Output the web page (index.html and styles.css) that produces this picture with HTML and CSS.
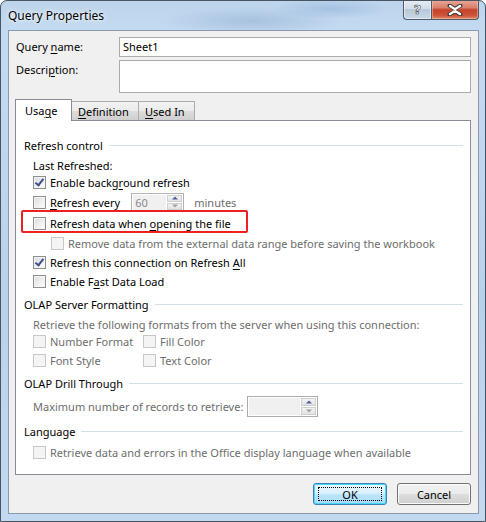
FILE: index.html
```html
<!DOCTYPE html>
<html>
<head>
<meta charset="utf-8">
<title>Query Properties</title>
<link rel="stylesheet" href="styles.css">
</head>
<body>
<div class="window">
  <div class="titlebar">
    <span class="title">Query Properties</span>
    <div class="caption-buttons">
      <div class="cap help">?</div>
      <div class="cap close">
        <svg width="16" height="12" viewBox="0 0 16 12">
          <path d="M2.5 1.5 L8 5 L13.5 1.5 M2.5 10.5 L8 7 L13.5 10.5" fill="none" stroke="#3a3a3a" stroke-width="4" stroke-linecap="round"/>
          <path d="M3 2 L8 5.2 L13 2 M3 10 L8 6.8 L13 10" fill="none" stroke="#ffffff" stroke-width="2.4" stroke-linecap="round"/>
        </svg>
      </div>
    </div>
  </div>

  <div class="client">
    <div class="field-row">
      <span class="field-label">Query <u>n</u>ame:</span>
      <div class="textbox">Sheet1</div>
    </div>
    <div class="field-row">
      <span class="field-label">Descri<u>p</u>tion:</span>
      <div class="textbox tall"></div>
    </div>

    <div class="tabs">
      <div class="tab active"><span>Usa<u>g</u>e</span></div>
      <div class="tab definition"><span><u>D</u>efinition</span></div>
      <div class="tab used-in"><span><u>U</u>sed In</span></div>
    </div>

    <div class="panel">
      <div class="group-title"><span>Refresh control</span></div>
      <div class="row indent mt4"><span>Last Refreshed:</span></div>
      <div class="row indent mt1"><span class="check checked"></span><span>Enable backg<u>r</u>ound refresh</span></div>
      <div class="row indent mt4">
        <span class="check"></span><span><u>R</u>efresh every</span>
        <div class="spin every">
          <span class="spin-value">60</span>
          <div class="spin-arrows">
            <span class="arrow up"></span>
            <span class="arrow down"></span>
          </div>
        </div>
        <span class="muted">minutes</span>
      </div>
      <div class="row indent mt5">
        <span class="check"></span><span>Refresh data when <u>o</u>pening the file</span>
        <div class="callout"></div>
      </div>
      <div class="row indent2 mt4 muted"><span class="check disabled"></span><span>Remove data from the external data range before saving the workbook</span></div>
      <div class="row indent mt3"><span class="check checked"></span><span>Refresh this connection on Refresh <u>A</u>ll</span></div>
      <div class="row indent mt3"><span class="check"></span><span>Enable F<u>a</u>st Data Load</span></div>

      <div class="group-title mt7"><span>OLAP Server Formatting</span></div>
      <div class="row indent mt4 muted"><span>Retrieve the following formats from the server when using this connection:</span></div>
      <div class="row indent mt1 muted">
        <span class="pair-item"><span class="check disabled"></span><span>Number Format</span></span>
        <span class="pair-item"><span class="check disabled"></span><span>Fill Color</span></span>
      </div>
      <div class="row indent mt3 muted">
        <span class="pair-item"><span class="check disabled"></span><span>Font Style</span></span>
        <span class="pair-item"><span class="check disabled"></span><span>Text Color</span></span>
      </div>

      <div class="group-title mt7"><span>OLAP Drill Through</span></div>
      <div class="row indent mt7 muted">
        <span>Maximum number of records to retrieve:</span>
        <div class="spin records">
          <span class="spin-value"></span>
          <div class="spin-arrows">
            <span class="arrow up"></span>
            <span class="arrow down"></span>
          </div>
        </div>
      </div>

      <div class="group-title mt9"><span>Language</span></div>
      <div class="row indent mt5 muted"><span class="check disabled"></span><span>Retrieve data and errors in the Office display language when available</span></div>
    </div>

    <div class="buttons">
      <div class="button default"><span class="focus">OK</span></div>
      <div class="button"><span>Cancel</span></div>
    </div>
  </div>
</div>
</body>
</html>
```

FILE: styles.css
```css
html, body {
  margin: 0;
  padding: 0;
  background: #ffffff;
}

body {
  font-family: "Noto Sans", "Open Sans", sans-serif;
  font-size: 11px;
  color: #000000;
}

u { text-decoration: underline; text-underline-offset: 2px; }

/* Aero window frame */
.window {
  width: 486px;
  height: 522px;
  box-sizing: border-box;
  border: 1px solid #4a5563;
  border-radius: 7px 7px 0 0;
  background:
    radial-gradient(ellipse 90px 14px at 250px 20px, rgba(120,150,190,0.35), transparent),
    radial-gradient(ellipse 60px 10px at 330px 8px, rgba(110,150,200,0.3), transparent),
    linear-gradient(to bottom, #bcd4ec 0px, #c4daf1 30px, #b9d2ec 300px, #c3d9f0 522px);
  display: flex;
  flex-direction: column;
  overflow: hidden;
}

.titlebar {
  height: 29px;
  display: flex;
  align-items: flex-start;
  justify-content: space-between;
  padding-left: 7px;
  flex: none;
}

.title {
  font-family: "Noto Sans", sans-serif;
  font-size: 12px;
  line-height: 29px;
  color: #000;
  text-shadow: 0 0 6px rgba(255,255,255,0.9), 0 0 3px rgba(255,255,255,0.9);
}

.caption-buttons {
  display: flex;
  margin-right: 6px;
  margin-top: -1px;
}

.cap {
  height: 20px;
  box-sizing: border-box;
  border: 1px solid #4e5a69;
  border-top: none;
  display: flex;
  align-items: center;
  justify-content: center;
}

.help {
  width: 28px;
  border-radius: 0 0 0 4px;
  border-right: none;
  background: linear-gradient(to bottom, #e6edf5 0%, #d3dde9 45%, #b9c8d8 50%, #c9d7e5 100%);
  box-shadow: inset 0 0 0 1px rgba(255,255,255,0.5);
  font-family: "DejaVu Sans", sans-serif;
  font-weight: bold;
  font-size: 13px;
  color: #ffffff;
  -webkit-text-stroke: 0.6px #3d4650;
  padding-bottom: 1px;
}

.close {
  width: 48px;
  border-radius: 0 0 4px 0;
  background: linear-gradient(to bottom, #e9a99b 0%, #d9806c 40%, #c4442a 52%, #cd5337 80%, #e08a6a 100%);
  box-shadow: inset 0 0 0 1px rgba(255,210,200,0.45);
}

/* dialog client area */
.client {
  margin: 0 6px 7px 7px;
  flex: 1;
  background: #f0f0f0;
  border: 1px solid #8a99ab;
  padding: 6px 7px 0 6px;
  display: flex;
  flex-direction: column;
}

.field-row {
  display: flex;
  align-items: flex-start;
  margin-bottom: 3px;
}

.field-label {
  width: 103px;
  padding-left: 1px;
  line-height: 16px;
  padding-top: 2px;
}

.textbox {
  flex: 1;
  height: 20px;
  box-sizing: border-box;
  border: 1px solid #ababab;
  background: #ffffff;
  padding-left: 3px;
  line-height: 17px;
}

.textbox.tall {
  height: 33px;
}

/* tab strip */
.tabs {
  display: flex;
  align-items: flex-end;
  margin-top: 3px;
  height: 21px;
  position: relative;
  z-index: 1;
}

.tab {
  height: 19px;
  box-sizing: border-box;
  border: 1px solid #acacac;
  border-bottom: none;
  margin-left: -1px;
  padding: 0 6px;
  line-height: 19px;
  white-space: nowrap;
  background: linear-gradient(to bottom, #f2f2f2 0%, #ebebeb 50%, #dddddd 51%, #cfcfcf 100%);
}

.tab.definition { width: 68px; }
.tab.used-in { width: 57px; }

.tab.active {
  height: 22px;
  margin-left: 0;
  margin-bottom: -1px;
  width: 57px;
  border-color: #898c95;
  background: #ffffff;
  padding-left: 9px;
  line-height: 21px;
  position: relative;
  z-index: 2;
}

.panel {
  height: 355px;
  box-sizing: border-box;
  border: 1px solid #898c95;
  background: #ffffff;
  padding: 16px 7px 0 8px;
  display: flex;
  flex-direction: column;
}

.group-title {
  height: 16px;
  display: flex;
  align-items: center;
  gap: 6px;
}

.group-title::after {
  content: "";
  flex: 1;
  height: 1px;
  background: #d5dfe5;
  margin-top: 1px;
}

.row {
  height: 16px;
  display: flex;
  align-items: center;
  white-space: nowrap;
  position: relative;
}

.indent { padding-left: 9px; }
.indent2 { padding-left: 27px; }

.mt1 { margin-top: 1px; }
.mt3 { margin-top: 3px; }
.mt4 { margin-top: 4px; }
.mt5 { margin-top: 5px; }
.mt7 { margin-top: 7px; }
.mt9 { margin-top: 9px; }

.muted { color: #6d6d6d; }

/* checkboxes */
.check {
  width: 13px;
  height: 13px;
  box-sizing: border-box;
  border: 1px solid #8f8f8f;
  background: linear-gradient(135deg, #dcdcdc 0%, #f4f4f4 70%, #ffffff 100%);
  box-shadow: inset 0 0 0 1px #f4f4f4;
  margin-right: 4px;
  flex: none;
  position: relative;
}

.check.checked::after {
  content: "";
  position: absolute;
  left: 3px;
  top: 0px;
  width: 3px;
  height: 7px;
  border: solid #3c4f8e;
  border-width: 0 2px 2px 0;
  transform: rotate(38deg);
}

.check.disabled {
  border-color: #c8c8c8;
  background: #f4f4f4;
  box-shadow: none;
}

.pair-item {
  display: flex;
  align-items: center;
}

.pair-item:first-child { width: 110px; }

/* spin boxes */
.spin {
  height: 19px;
  box-sizing: border-box;
  border: 1px solid #b2b2b2;
  background: #ffffff;
  display: flex;
  padding: 1px;
  gap: 1px;
  flex: none;
}

.spin.every {
  width: 53px;
  margin-left: 11px;
  margin-right: 10px;
}

.spin.records {
  width: 71px;
  height: 21px;
  margin-left: 4px;
  border-color: #acacac;
}

.spin-value {
  flex: 1;
  background: #f0f0f0;
  color: #8a8a8a;
  padding-left: 2px;
  line-height: 15px;
}

.spin-arrows {
  width: 15px;
  display: flex;
  flex-direction: column;
  gap: 1px;
}

.arrow {
  flex: 1;
  background: linear-gradient(to bottom, #f3f3f3, #e2e2e2);
  border: 1px solid #cfcfcf;
  box-sizing: border-box;
  position: relative;
}

.arrow::after {
  content: "";
  position: absolute;
  left: 50%;
  top: 50%;
  transform: translate(-50%, -50%);
  border-left: 3px solid transparent;
  border-right: 3px solid transparent;
}

.arrow.up::after { border-bottom: 3px solid #4e5d9b; }
.arrow.down::after { border-top: 3px solid #a0a0a0; }

/* highlight box round the open-refresh option */
.callout {
  position: absolute;
  left: -3px;
  top: -5px;
  width: 227px;
  height: 23px;
  border: 2px solid #f02020;
  border-radius: 2px;
  box-sizing: border-box;
}

/* dialog buttons */
.buttons {
  display: flex;
  justify-content: flex-end;
  gap: 10px;
  margin-top: 8px;
}

.button {
  width: 74px;
  height: 22px;
  box-sizing: border-box;
  border: 1px solid #707070;
  border-radius: 3px;
  background: linear-gradient(to bottom, #f2f2f2 0%, #ebebeb 48%, #dddddd 52%, #cfcfcf 100%);
  box-shadow: inset 0 0 0 1px #fcfcfc;
  display: flex;
  align-items: center;
  justify-content: center;
}

.button.default {
  border-color: #3c7fb1;
  box-shadow: inset 0 0 0 1px #48d8fb;
  background: linear-gradient(to bottom, #eaf6fd 0%, #d9f0fc 48%, #bee6fd 52%, #a7d9f5 100%);
}

.button .focus {
  width: 64px;
  height: 14px;
  border: 1px dotted #000;
  box-sizing: border-box;
  display: flex;
  align-items: center;
  justify-content: center;
}
```
